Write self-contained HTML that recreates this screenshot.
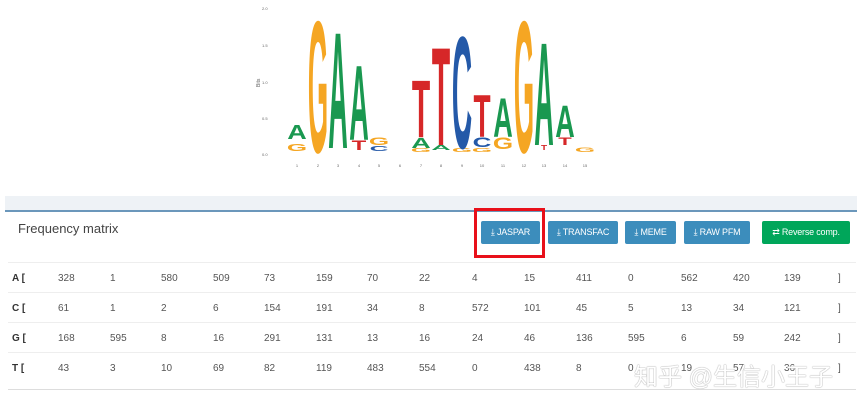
<!DOCTYPE html>
<html><head><meta charset="utf-8"><style>
body{margin:0;width:864px;height:403px;background:#fff;font-family:"Liberation Sans",sans-serif;position:relative;overflow:hidden}
.abs{position:absolute}
.band{left:5px;top:196px;width:852px;height:14px;background:#eef2f6}
.bl{left:5px;top:210px;width:852px;height:2px;background:#6b97bb}
.title{left:18px;top:221px;font-size:13px;color:#444}
.btn{position:absolute;top:221px;height:23px;background:#3c8dbc;border-radius:2px;color:#fff;font-size:9px;line-height:23px;text-align:center;letter-spacing:-0.2px}
.red{left:474px;top:208px;width:65px;height:44px;border:3px solid #e8101a}
.row{position:absolute;left:8px;width:848px;height:30px;border-top:1px solid #eee;font-size:10px;color:#555}
.row span{position:absolute;top:10px}
.row b{position:absolute;left:4px;top:10px;font-size:10px;color:#333}
.wm{left:634px;top:357px;font-family:"Liberation Sans","Noto Sans CJK SC",sans-serif;font-size:24px;color:#fff;text-shadow:0 0 1px #999,0 0 1px #aaa}
</style></head><body>
<svg class="abs" style="left:0;top:0" width="864" height="175">
<g font-family="Liberation Sans" fill="#666">
<text x="262" y="10" font-size="4">2.0</text><text x="262" y="47" font-size="4">1.5</text>
<text x="262" y="84" font-size="4">1.0</text><text x="262" y="120" font-size="4">0.5</text><text x="262" y="156" font-size="4">0.0</text>
<text transform="translate(260,87) rotate(-90)" font-size="5">Bits</text>
</g>
<g font-family="Liberation Sans" font-size="4" fill="#666" text-anchor="middle">
<text x="297" y="167">1</text><text x="318" y="167">2</text><text x="338" y="167">3</text><text x="359" y="167">4</text><text x="379" y="167">5</text><text x="400" y="167">6</text><text x="421" y="167">7</text><text x="441" y="167">8</text><text x="462" y="167">9</text><text x="482" y="167">10</text><text x="503" y="167">11</text><text x="524" y="167">12</text><text x="544" y="167">13</text><text x="565" y="167">14</text><text x="585" y="167">15</text>
</g>
<g font-family="Liberation Sans" font-weight="bold" font-size="100" text-anchor="middle">
<text fill="#f5a623" transform="translate(297,151) scale(0.26,0.1)">G</text>
<text fill="#1a9850" transform="translate(297,139) scale(0.27,0.2)">A</text>
<text fill="#f5a623" transform="translate(318,152) scale(0.26,1.88)">G</text>
<text fill="#1a9850" transform="translate(338,148) scale(0.27,1.66)">A</text>
<text fill="#1a9850" transform="translate(359,140) scale(0.27,1.07)">A</text>
<text fill="#d62728" transform="translate(359,150) scale(0.24,0.14)">T</text>
<text fill="#2459a8" transform="translate(379,151) scale(0.26,0.07)">C</text>
<text fill="#f5a623" transform="translate(379,145) scale(0.26,0.11)">G</text>
<text fill="#d62728" transform="translate(421,137) scale(0.3,0.82)">T</text>
<text fill="#1a9850" transform="translate(421,148) scale(0.27,0.15)">A</text>
<text fill="#f5a623" transform="translate(421,152) scale(0.26,0.05)">G</text>
<text fill="#d62728" transform="translate(441,145) scale(0.3,1.4)">T</text>
<text fill="#1a9850" transform="translate(441,150) scale(0.27,0.07)">A</text>
<text fill="#f5a623" transform="translate(462,152) scale(0.26,0.05)">G</text>
<text fill="#2459a8" transform="translate(462,148) scale(0.28,1.6)">C</text>
<text fill="#f5a623" transform="translate(482,152) scale(0.26,0.05)">G</text>
<text fill="#2459a8" transform="translate(482,147) scale(0.26,0.14)">C</text>
<text fill="#d62728" transform="translate(482,137) scale(0.28,0.6)">T</text>
<text fill="#f5a623" transform="translate(503,149) scale(0.26,0.17)">G</text>
<text fill="#1a9850" transform="translate(503,137) scale(0.27,0.56)">A</text>
<text fill="#f5a623" transform="translate(524,152) scale(0.26,1.88)">G</text>
<text fill="#1a9850" transform="translate(544,145) scale(0.27,1.47)">A</text>
<text fill="#d62728" transform="translate(544,150) scale(0.1,0.07)">T</text>
<text fill="#1a9850" transform="translate(565,137) scale(0.27,0.45)">A</text>
<text fill="#d62728" transform="translate(565,145) scale(0.22,0.11)">T</text>
<text fill="#f5a623" transform="translate(585,152) scale(0.26,0.06)">G</text>
</g>
</svg>
<div class="abs band"></div><div class="abs bl"></div>
<div class="abs title">Frequency matrix</div>
<div class="btn" style="left:481px;width:59px">⤓ JASPAR</div>
<div class="btn" style="left:548px;width:70px">⤓ TRANSFAC</div>
<div class="btn" style="left:625px;width:51px">⤓ MEME</div>
<div class="btn" style="left:684px;width:66px">⤓ RAW PFM</div>
<div class="btn" style="left:762px;width:88px;background:#00a65a">⇄ Reverse comp.</div>
<div class="abs red"></div>
<div class="row" style="top:262px"><b>A [</b><span style="left:50px">328</span><span style="left:102px">1</span><span style="left:153px">580</span><span style="left:205px">509</span><span style="left:256px">73</span><span style="left:308px">159</span><span style="left:359px">70</span><span style="left:411px">22</span><span style="left:464px">4</span><span style="left:516px">15</span><span style="left:568px">411</span><span style="left:620px">0</span><span style="left:673px">562</span><span style="left:725px">420</span><span style="left:776px">139</span><span style="left:830px">]</span></div>
<div class="row" style="top:292px"><b>C [</b><span style="left:50px">61</span><span style="left:102px">1</span><span style="left:153px">2</span><span style="left:205px">6</span><span style="left:256px">154</span><span style="left:308px">191</span><span style="left:359px">34</span><span style="left:411px">8</span><span style="left:464px">572</span><span style="left:516px">101</span><span style="left:568px">45</span><span style="left:620px">5</span><span style="left:673px">13</span><span style="left:725px">34</span><span style="left:776px">121</span><span style="left:830px">]</span></div>
<div class="row" style="top:322px"><b>G [</b><span style="left:50px">168</span><span style="left:102px">595</span><span style="left:153px">8</span><span style="left:205px">16</span><span style="left:256px">291</span><span style="left:308px">131</span><span style="left:359px">13</span><span style="left:411px">16</span><span style="left:464px">24</span><span style="left:516px">46</span><span style="left:568px">136</span><span style="left:620px">595</span><span style="left:673px">6</span><span style="left:725px">59</span><span style="left:776px">242</span><span style="left:830px">]</span></div>
<div class="row" style="top:352px;height:36px;border-bottom:1px solid #ddd"><b>T [</b><span style="left:50px">43</span><span style="left:102px">3</span><span style="left:153px">10</span><span style="left:205px">69</span><span style="left:256px">82</span><span style="left:308px">119</span><span style="left:359px">483</span><span style="left:411px">554</span><span style="left:464px">0</span><span style="left:516px">438</span><span style="left:568px">8</span><span style="left:620px">0</span><span style="left:673px">19</span><span style="left:725px">57</span><span style="left:776px">36</span><span style="left:830px">]</span></div>
<div class="abs wm">知乎 @生信小王子</div>
</body></html>
